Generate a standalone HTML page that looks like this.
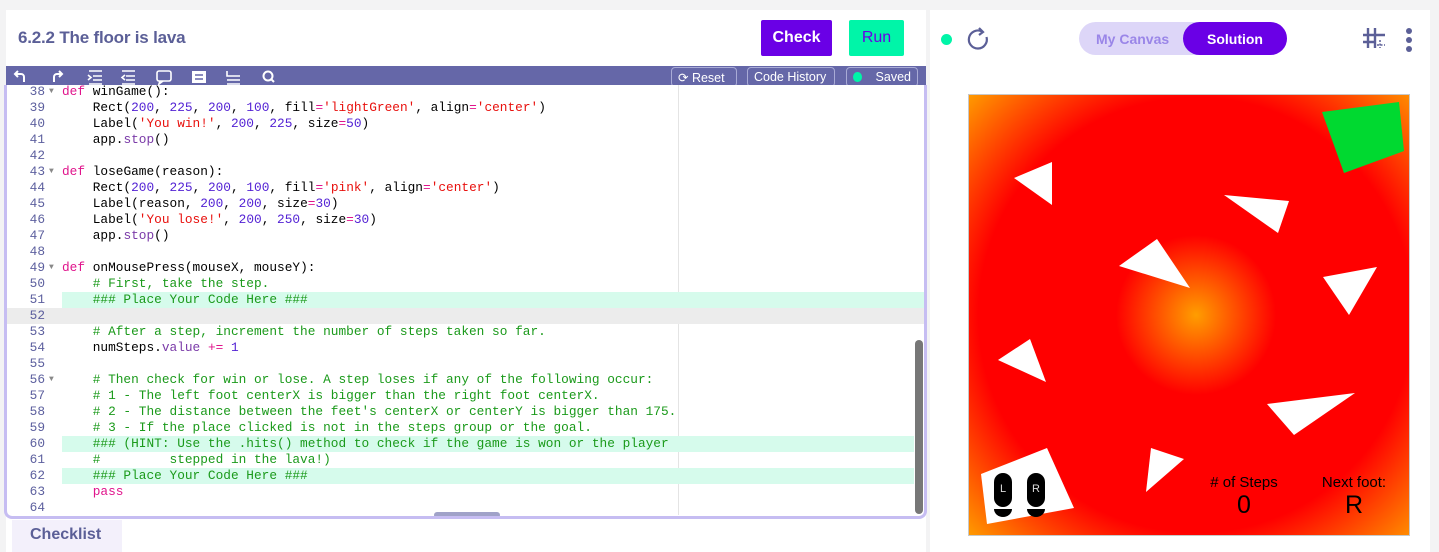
<!DOCTYPE html>
<html><head><meta charset="utf-8"><style>
*{margin:0;padding:0;box-sizing:border-box}
body{width:1439px;height:552px;overflow:hidden;background:#f3f3f4;font-family:"Liberation Sans",sans-serif;position:relative}
.abs{position:absolute}
.left{left:6px;top:10px;width:920px;height:542px;background:#fff}
.title{left:18px;top:28px;font-size:17px;font-weight:bold;color:#5b5f97;letter-spacing:-0.2px}
.btn{top:20px;height:36px;border-radius:2px;font-size:16px;font-weight:bold;display:flex;align-items:center;justify-content:center}
.tool{left:6px;top:66px;width:920px;height:21px;background:#6567a8}
.tb{top:67px;height:20px;border:1px solid #a9abd6;border-radius:4px;color:#fff;font-size:12.5px;display:flex;align-items:center;padding:0 6px}
.ed{left:4px;top:85px;width:923px;height:434px;border:3px solid #c6bdf2;border-top:none;border-radius:0 0 8px 8px;background:#fff;overflow:hidden}
.code{font-family:"Liberation Mono",monospace;font-size:12.8px;line-height:16px;white-space:pre}
.ln{position:absolute;left:0;width:41px;text-align:right;color:#5c5f9e}
.fd{position:absolute;left:45px;color:#888;font-size:8px}
.l{position:absolute;left:58px;color:#000}
.k{color:#e0148c}.n{color:#5322d4}.s{color:#e8100d}.c{color:#1b9a1b}.m{color:#7a3aa8}
.right{left:930px;top:10px;width:500px;height:542px;background:#fff}
</style></head><body>
<div class="abs left"></div>
<div class="abs title">6.2.2 The floor is lava</div>
<div class="abs btn" style="left:761px;width:71px;background:#6a00e6;color:#fff">Check</div>
<div class="abs btn" style="left:849px;width:55px;background:#00f5a8;color:#6a00e6;font-weight:normal">Run</div>
<div class="abs tool"></div>
<svg class="abs" style="left:10px;top:67px" width="270" height="19" fill="none" stroke="#fff" stroke-width="2">
<path d="M14 15v-5a3 3 0 0 0-3-3H5M8 4L5 7l3 3"/>
<path d="M44 15v-5a3 3 0 0 1 3-3h5M49 4l3 3-3 3"/>
<path d="M79 4h13M83 9h9M83 13h9M79 17h13M78 8l3 2.5-3 2.5" stroke-width="1.6"/>
<path d="M112 4h13M116 9h9M116 13h9M112 17h13M115 8l-3 2.5 3 2.5" stroke-width="1.6"/>
<rect x="147" y="4" width="14" height="10" rx="2" stroke-width="1.6"/><path d="M150 14l-1 3 4-3" stroke-width="1.6"/>
<rect x="182" y="4" width="14" height="12" fill="#fff" stroke="none"/><path d="M185 8h8M185 12h8" stroke="#6567a8" stroke-width="1.5"/>
<path d="M217 4v5h6M217 13h13M223 9h7M217 17h13" stroke-width="1.6"/>
<circle cx="258" cy="9" r="4.5"/><path d="M261 12l3 3"/>
</svg>
<div class="abs tb" style="left:671px;width:66px">⟳ Reset</div>
<div class="abs tb" style="left:747px;width:88px">Code History</div>
<div class="abs tb" style="left:846px;width:72px"><span style="display:inline-block;width:10px;height:10px;border-radius:50%;background:#00f5a8;margin-right:14px"></span>Saved</div>
<div class="abs ed">
<div class="abs" style="left:671px;top:0;width:1px;height:430px;background:#e4e4e4"></div>
<div class="abs" style="left:55px;top:207px;width:862px;height:16px;background:#d6fbec"></div>
<div class="abs" style="left:0;top:223px;width:920px;height:16px;background:#ececec"></div>
<div class="abs" style="left:55px;top:351px;width:852px;height:16px;background:#d6fbec"></div>
<div class="abs" style="left:55px;top:383px;width:852px;height:16px;background:#d6fbec"></div>
<div class="abs" style="left:908px;top:255px;width:8px;height:174px;background:#777;border-radius:4px"></div>
<div class="abs" style="left:427px;top:427px;width:66px;height:6px;background:#a0a2c8;border-radius:3px"></div>
</div>
<div class="abs code" style="left:4px;top:84px;width:920px;height:432px;overflow:hidden">
<span class="ln" style="top:0">38</span><span class="fd" style="top:0">▼</span><span class="l" style="top:0"><span class="k">def</span> winGame():</span>
<span class="ln" style="top:16px">39</span><span class="l" style="top:16px">    Rect(<span class="n">200</span>, <span class="n">225</span>, <span class="n">200</span>, <span class="n">100</span>, fill<span class="k">=</span><span class="s">'lightGreen'</span>, align<span class="k">=</span><span class="s">'center'</span>)</span>
<span class="ln" style="top:32px">40</span><span class="l" style="top:32px">    Label(<span class="s">'You win!'</span>, <span class="n">200</span>, <span class="n">225</span>, size<span class="k">=</span><span class="n">50</span>)</span>
<span class="ln" style="top:48px">41</span><span class="l" style="top:48px">    app.<span class="m">stop</span>()</span>
<span class="ln" style="top:64px">42</span>
<span class="ln" style="top:80px">43</span><span class="fd" style="top:80px">▼</span><span class="l" style="top:80px"><span class="k">def</span> loseGame(reason):</span>
<span class="ln" style="top:96px">44</span><span class="l" style="top:96px">    Rect(<span class="n">200</span>, <span class="n">225</span>, <span class="n">200</span>, <span class="n">100</span>, fill<span class="k">=</span><span class="s">'pink'</span>, align<span class="k">=</span><span class="s">'center'</span>)</span>
<span class="ln" style="top:112px">45</span><span class="l" style="top:112px">    Label(reason, <span class="n">200</span>, <span class="n">200</span>, size<span class="k">=</span><span class="n">30</span>)</span>
<span class="ln" style="top:128px">46</span><span class="l" style="top:128px">    Label(<span class="s">'You lose!'</span>, <span class="n">200</span>, <span class="n">250</span>, size<span class="k">=</span><span class="n">30</span>)</span>
<span class="ln" style="top:144px">47</span><span class="l" style="top:144px">    app.<span class="m">stop</span>()</span>
<span class="ln" style="top:160px">48</span>
<span class="ln" style="top:176px">49</span><span class="fd" style="top:176px">▼</span><span class="l" style="top:176px"><span class="k">def</span> onMousePress(mouseX, mouseY):</span>
<span class="ln" style="top:192px">50</span><span class="l c" style="top:192px">    # First, take the step.</span>
<span class="ln" style="top:208px">51</span><span class="l c" style="top:208px">    ### Place Your Code Here ###</span>
<span class="ln" style="top:224px">52</span>
<span class="ln" style="top:240px">53</span><span class="l c" style="top:240px">    # After a step, increment the number of steps taken so far.</span>
<span class="ln" style="top:256px">54</span><span class="l" style="top:256px">    numSteps.<span class="m">value</span> <span class="k">+=</span> <span class="n">1</span></span>
<span class="ln" style="top:272px">55</span>
<span class="ln" style="top:288px">56</span><span class="fd" style="top:288px">▼</span><span class="l c" style="top:288px">    # Then check for win or lose. A step loses if any of the following occur:</span>
<span class="ln" style="top:304px">57</span><span class="l c" style="top:304px">    # 1 - The left foot centerX is bigger than the right foot centerX.</span>
<span class="ln" style="top:320px">58</span><span class="l c" style="top:320px">    # 2 - The distance between the feet's centerX or centerY is bigger than 175.</span>
<span class="ln" style="top:336px">59</span><span class="l c" style="top:336px">    # 3 - If the place clicked is not in the steps group or the goal.</span>
<span class="ln" style="top:352px">60</span><span class="l c" style="top:352px">    ### (HINT: Use the .hits() method to check if the game is won or the player</span>
<span class="ln" style="top:368px">61</span><span class="l c" style="top:368px">    #         stepped in the lava!)</span>
<span class="ln" style="top:384px">62</span><span class="l c" style="top:384px">    ### Place Your Code Here ###</span>
<span class="ln" style="top:400px">63</span><span class="l k" style="top:400px">    pass</span>
<span class="ln" style="top:416px">64</span>
</div>
<div class="abs" style="left:12px;top:520px;width:110px;height:32px;background:#f3f0fb;color:#5b5f97;font-size:16px;font-weight:bold;padding:6px 0 0 18px">Checklist</div>

<div class="abs right"></div>
<div class="abs" style="left:941px;top:34px;width:11px;height:11px;border-radius:50%;background:#00f5a8"></div>
<svg class="abs" style="left:966px;top:26px" width="26" height="26" fill="none" stroke="#5b5f97" stroke-width="2.2"><path d="M16 5.5A9 9 0 1 0 20.5 11"/><path d="M13 2l4 4-4 3" /></svg>
<div class="abs" style="left:1079px;top:22px;width:208px;height:33px;border-radius:17px;background:#ddd6f8"></div>
<div class="abs" style="left:1096px;top:31px;font-size:14px;font-weight:bold;color:#9a86e8">My Canvas</div>
<div class="abs" style="left:1183px;top:22px;width:104px;height:33px;border-radius:17px;background:#6a00e6;color:#fff;font-size:14px;font-weight:bold;display:flex;align-items:center;justify-content:center">Solution</div>
<svg class="abs" style="left:1362px;top:26px" width="26" height="26" stroke="#5b5f97" stroke-width="2.4"><path d="M6 2v20M13 2v20M1 9h22M1 16h13"/><path d="M18 14v8M15 19h8" stroke-width="1.5" stroke-dasharray="2 1.5"/></svg>
<div class="abs" style="left:1406px;top:28px;width:6px;height:6px;border-radius:50%;background:#5b5f97;box-shadow:0 9px 0 #5b5f97,0 18px 0 #5b5f97"></div>

<svg class="abs" style="left:968px;top:94px;border:1px solid #c8c8c8" width="442" height="442" font-family="Liberation Sans,sans-serif">
<defs><radialGradient id="g" gradientUnits="userSpaceOnUse" cx="227" cy="220" r="320">
<stop offset="0" stop-color="#ff9d00"/><stop offset="0.25" stop-color="#ff0000"/><stop offset="0.68" stop-color="#ff0000"/><stop offset="1" stop-color="#ffa000"/></radialGradient></defs>
<rect width="442" height="442" fill="url(#g)"/>
<polygon points="353,17 430,7 435,56 375,78" fill="#00d930"/>
<g fill="#fff">
<polygon points="45,83 83,67 83,110"/>
<polygon points="255,100 320,106 309,138"/>
<polygon points="150,171 188,144 221,193"/>
<polygon points="354,182 408,172 380,220"/>
<polygon points="29,265 61,244 77,287"/>
<polygon points="298,309 386,298 325,340"/>
<polygon points="182,353 215,364 177,397"/>
<polygon points="12,379 78,353 105,413 18,429"/>
</g>
<g fill="#000"><rect x="25" y="378" width="18" height="34" rx="9"/><path d="M25 414h18a9 8 0 0 1-18 0z"/>
<rect x="58" y="378" width="18" height="34" rx="9"/><path d="M58 414h18a9 8 0 0 1-18 0z"/></g>
<text x="34" y="397" fill="#ddd" font-size="11" text-anchor="middle">L</text>
<text x="67" y="397" fill="#ddd" font-size="11" text-anchor="middle">R</text>
<g fill="#000" text-anchor="middle"><text x="275" y="392" font-size="15"># of Steps</text><text x="275" y="418" font-size="25">0</text>
<text x="385" y="392" font-size="15">Next foot:</text><text x="385" y="418" font-size="25">R</text></g>
</svg>
</body></html>
